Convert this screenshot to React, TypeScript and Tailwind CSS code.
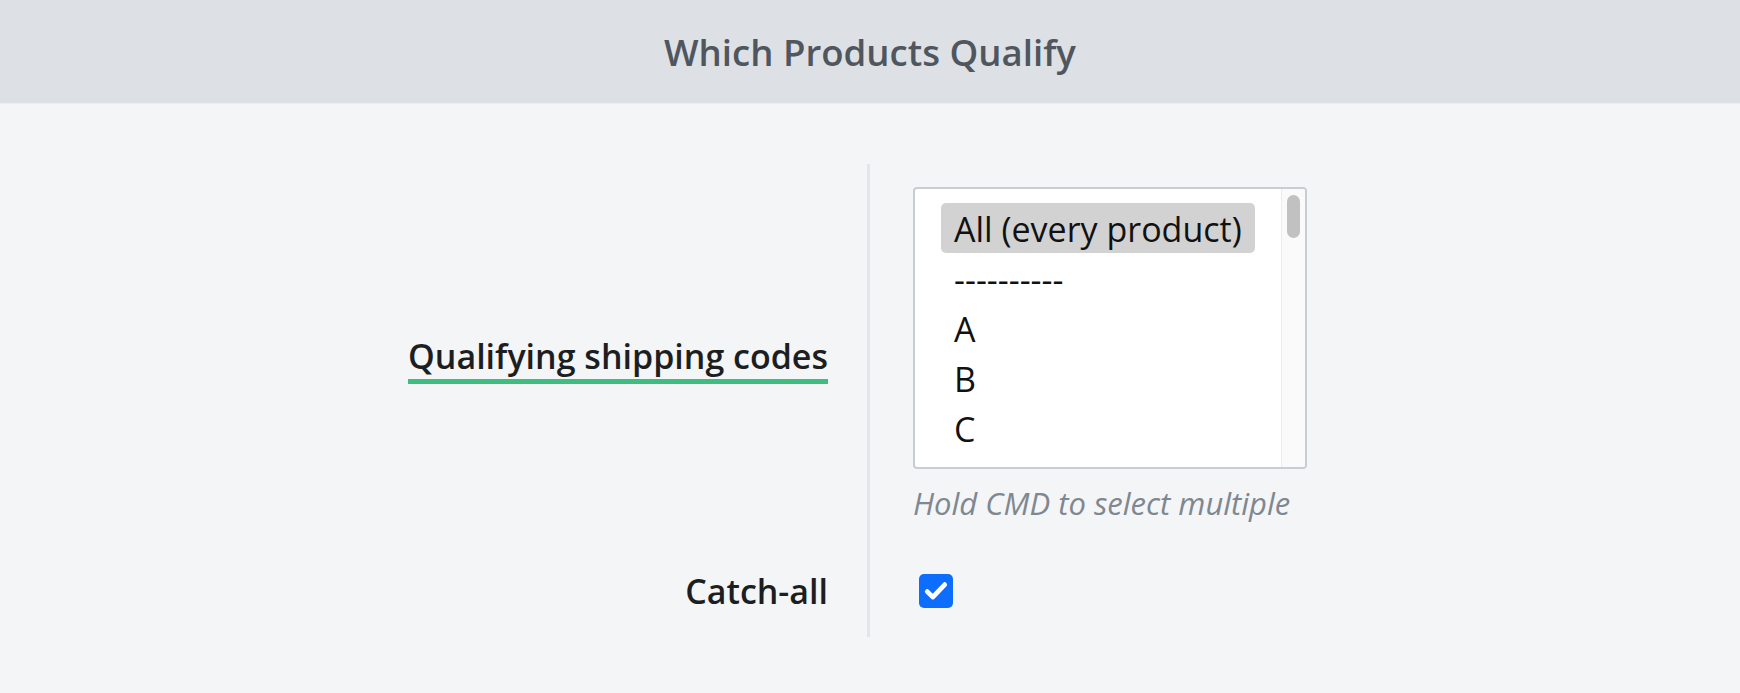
import React from "react";

export default function App() {
  const font = { fontFamily: '"Open Sans", "Noto Sans", sans-serif' };
  return (
    <div className="min-h-[693px] w-full bg-[#f4f5f7]" style={font}>
      <div className="h-[104px] bg-[#dde1e5] flex items-center justify-center border-b border-[#eceef1]">
        <h1 className="text-[36.6px] font-semibold text-[#50565e] leading-none mt-[2px]">Which Products Qualify</h1>
      </div>
      <div className="pt-[60px]">
        {/* Row 1 */}
        <div className="flex">
          <div className="w-[867px] shrink-0 flex justify-end items-start pr-[39px] pt-[169px]">
            <span className="inline-block text-[34px] font-semibold text-[#1c1e21] leading-[46px] border-b-[5px] border-[#3dbe80]">
              Qualifying shipping codes
            </span>
          </div>
          <div className="border-l-[3px] border-[#e2e5e9] pl-[43px] pt-[23px]">
            <div className="w-[394px] h-[282px] bg-white border-2 border-[#c8cdd4] rounded-[4px] flex overflow-hidden">
              <div className="flex-1 pt-[14px] px-[26px]">
                {["All (every product)", "----------", "A", "B", "C"].map((o, i) => (
                  <div
                    key={i}
                    className={
                      "h-[50px] leading-[52px] px-[13px] text-[34px] text-[#111] rounded-[5px] whitespace-nowrap " +
                      (i === 0 ? "bg-[#d2d2d2]" : "")
                    }
                  >
                    {o}
                  </div>
                ))}
              </div>
              <div className="w-[27px] bg-[#fafafa] border-l border-[#ececec] flex justify-center pt-[6px]">
                <div className="w-[13px] h-[43px] rounded-full bg-[#c1c1c1]" />
              </div>
            </div>
            <div className="mt-[12px] text-[31px] italic text-[#7f8790] leading-[44px]">
              Hold CMD to select multiple
            </div>
          </div>
        </div>
        {/* Row 2 */}
        <div className="flex">
          <div className="w-[867px] shrink-0 flex justify-end pr-[39px] pt-[41px] pb-[21px]">
            <span className="text-[34px] font-semibold text-[#1c1e21] leading-[50px]">Catch-all</span>
          </div>
          <div className="border-l-[3px] border-[#e2e5e9] pl-[49px] pt-[41px] pb-[21px]">
            <div className="h-[50px] flex items-center">
              <div className="w-[34px] h-[34px] rounded-[5px] bg-[#0d6efd] flex items-center justify-center">
                <svg width="28" height="28" viewBox="0 0 24 24" fill="none">
                  <path d="M4.5 12.5l4.8 4.8L19.5 6.5" stroke="white" strokeWidth="4" strokeLinecap="round" strokeLinejoin="round" />
                </svg>
              </div>
            </div>
          </div>
        </div>
      </div>
    </div>
  );
}
